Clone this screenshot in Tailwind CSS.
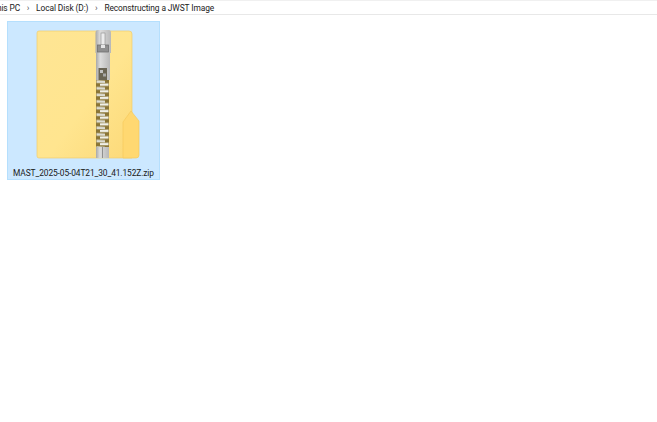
<!DOCTYPE html>
<html lang="en">

<head>
    <meta charset="UTF-8" />
    <title>Reconstructing a JWST Image</title>
    <script src="https://cdn.jsdelivr.net/npm/@tailwindcss/browser@4"></script>
</head>

<body class="bg-white h-[422px] overflow-hidden font-['Roboto',sans-serif]">
    <!-- Breadcrumb -->
    <nav class="h-[15px] pt-[1px] border-t border-t-[#f0f0f0] border-b border-b-[#e8e8e8] flex items-center overflow-hidden text-[8.4px] tracking-[-0.1px] leading-none text-[#1a1a1a] whitespace-nowrap -ml-[8px]">
        <span>This PC</span>
        <span class="w-[16px] text-center text-[9px] text-[#555]">›</span>
        <span>Local Disk (D:)</span>
        <span class="w-[16px] text-center text-[9px] text-[#555]">›</span>
        <span>Reconstructing a JWST Image</span>
    </nav>

    <!-- File tile -->
    <main class="pl-[7px] pt-[6px]">
        <div class="w-[153px] h-[159px] bg-[#cce8ff] border border-[#b5dffd] flex flex-col items-center">
            <svg class="w-[151px] h-[145px] shrink-0" viewBox="8 22 151 145">
                <defs>
                    <linearGradient id="back" x1="0" y1="0" x2="1" y2="1">
                        <stop offset="0" stop-color="#fee594" />
                        <stop offset="0.55" stop-color="#ffe58f" />
                        <stop offset="1" stop-color="#fcd978" />
                    </linearGradient>
                    <linearGradient id="metal" x1="0" y1="0" x2="1" y2="0">
                        <stop offset="0" stop-color="#a8a8a8" />
                        <stop offset="0.3" stop-color="#dcdcdc" />
                        <stop offset="1" stop-color="#b8b8b8" />
                    </linearGradient>
                    <pattern id="teeth" x="96" y="80" width="13" height="6.600" patternUnits="userSpaceOnUse">
                        <rect width="13" height="6.600" fill="#8a7536" />
                        <path d="M0.500 0.300 L9 0.800 L9 3 L0.500 3Z" fill="#dcdcd2" />
                        <path d="M12.500 3.400 L4 3.800 L4 6 L12.500 6Z" fill="#f0f0e8" />
                    </pattern>
                </defs>
                <!-- folder -->
                <path d="M39 31H129Q132 31 132 34V158H39Q37 158 37 156V33Q37 31 39 31Z" fill="url(#back)" stroke="#f0cd6e" stroke-width="0.7" />
                <path d="M123 122L131 111L139 121V155Q139 158 136 158H123Z" fill="#ffd871" stroke="#f6ca5c" stroke-width="0.7" />
                <!-- zipper teeth -->
                <rect x="96" y="80" width="13" height="68" fill="url(#teeth)" />
                <!-- pull tab -->
                <path d="M95.500 33Q95.500 30 98 30H108.500Q111 30 111 33V53H95.500Z" fill="url(#metal)" />
                <rect x="101" y="33" width="4" height="13" fill="#ececec" stroke="#8c8c8c" stroke-width="0.6" />
                <rect x="97.500" y="45" width="11" height="7" fill="#8f8f8f" stroke="#6f6f6f" stroke-width="0.8" />
                <rect x="101" y="45" width="4" height="3" fill="#e6e6e6" />
                <!-- slider -->
                <path d="M96 53H110V80H96Z" fill="url(#metal)" />
                <rect x="98.500" y="68" width="8.500" height="12" fill="#6a6555" />
                <rect x="100" y="70" width="3" height="3" fill="#c2c2c2" />
                <rect x="103" y="73.500" width="3" height="3" fill="#a8a8a8" />
                <!-- bottom stop -->
                <rect x="96" y="147" width="13" height="11" fill="url(#metal)" />
                <rect x="102" y="147" width="1" height="11" fill="#8f8f8f" />
            </svg>
            <span class="text-[8.4px] tracking-[-0.1px] leading-[13px] text-[#1a1a1a] whitespace-nowrap">MAST_2025-05-04T21_30_41.152Z.zip</span>
        </div>
    </main>
</body>

</html>
